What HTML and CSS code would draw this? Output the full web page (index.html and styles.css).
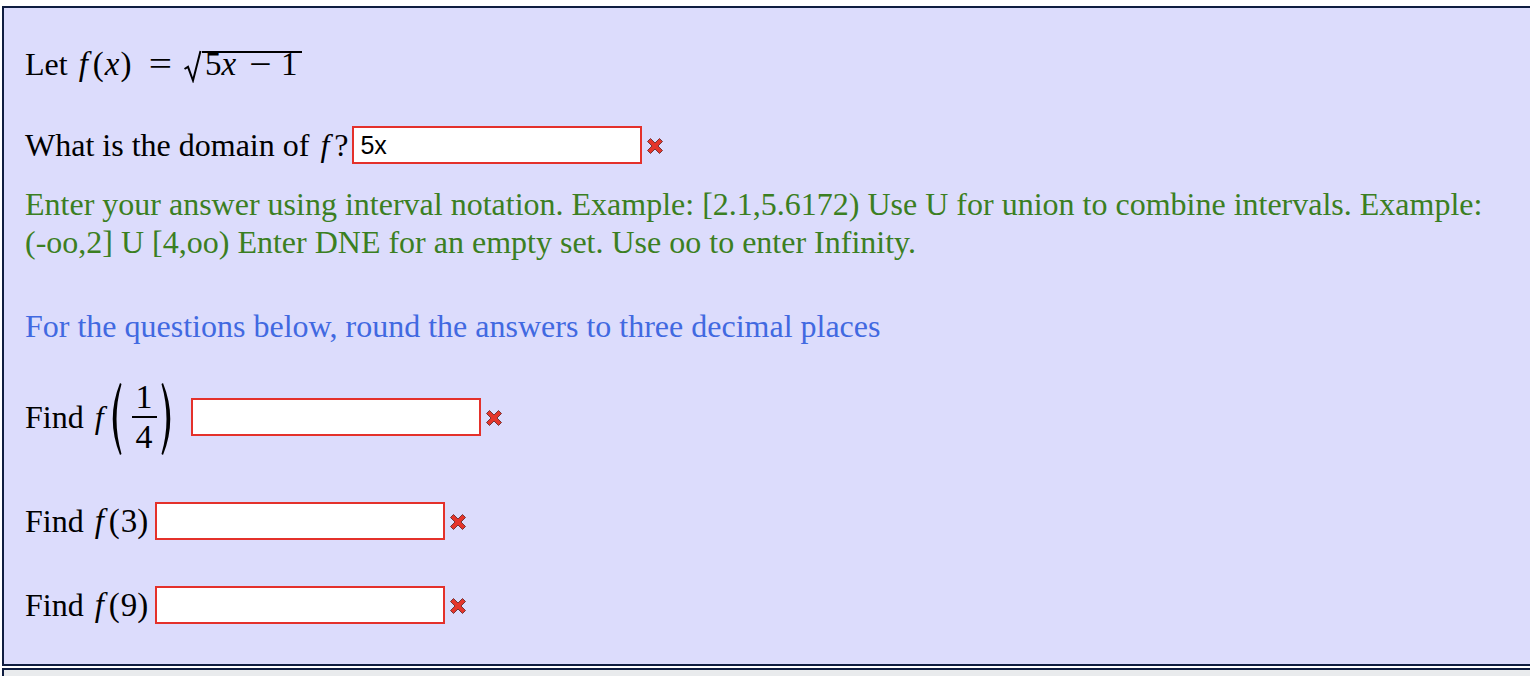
FILE: index.html
```html
<!DOCTYPE html>
<html>
<head>
<meta charset="utf-8">
<link rel="stylesheet" href="styles.css">
</head>
<body>
<div class="problem">
  <div class="row r-let">
    <span class="lbl">Let <span class="math"><i class="mf">f</i><span class="p">(</span><i class="mx">x</i><span class="p">)</span><span class="eq">=</span><span class="sqrt"><svg class="rad" width="18" height="33" viewBox="0 0 18 33"><path d="M0.5 19 L4 16.8 L9 30.5 L16.5 1" stroke="#000" stroke-width="2" fill="none" stroke-linejoin="miter"/></svg><span class="radicand">5<i class="mx">x</i><span class="minus">−</span>1</span></span></span></span>
  </div>
  <div class="row r-domain">
    <span class="lbl">What is the domain of <i class="mf">f</i>?</span>
    <input class="ans ans-wide" type="text" value="5x">
    <svg class="cross" width="16" height="16" viewBox="0 0 16 16"><path d="M3.5 0.5 L8 5 L12.5 0.5 L15.5 3.5 L11 8 L15.5 12.5 L12.5 15.5 L8 11 L3.5 15.5 L0.5 12.5 L5 8 L0.5 3.5 Z" fill="#e5352b" stroke="#6a2d2d" stroke-width="0.9"/></svg>
  </div>
  <p class="hint">Enter your answer using interval notation. Example: [2.1,5.6172) Use U for union to combine intervals. Example: <span class="nw">(-oo,2]</span> U [4,oo) Enter DNE for an empty set. Use oo to enter Infinity.</p>
  <p class="note">For the questions below, round the answers to three decimal places</p>
  <div class="row r-frac">
    <span class="lbl">Find <i class="mf">f</i></span>
    <svg class="bigp" width="17" height="74" viewBox="0 0 17 74"><path d="M15 1 Q0.5 37 15 73 L16.5 72 Q6.5 37 16.5 2 Z" fill="#000"/></svg>
    <span class="frac"><span class="num">1</span><span class="bar"></span><span class="den">4</span></span>
    <svg class="bigp bigp-r" width="17" height="74" viewBox="0 0 17 74"><path d="M2 1 Q16.5 37 2 73 L0.5 72 Q10.5 37 0.5 2 Z" fill="#000"/></svg>
    <input class="ans ans-frac" type="text" value="">
    <svg class="cross" width="16" height="16" viewBox="0 0 16 16"><path d="M3.5 0.5 L8 5 L12.5 0.5 L15.5 3.5 L11 8 L15.5 12.5 L12.5 15.5 L8 11 L3.5 15.5 L0.5 12.5 L5 8 L0.5 3.5 Z" fill="#e5352b" stroke="#6a2d2d" stroke-width="0.9"/></svg>
  </div>
  <div class="row r-f3">
    <span class="lbl">Find <span class="math"><i class="mf">f</i><span class="p">(</span>3<span class="p">)</span></span></span>
    <input class="ans" type="text" value="">
    <svg class="cross" width="16" height="16" viewBox="0 0 16 16"><path d="M3.5 0.5 L8 5 L12.5 0.5 L15.5 3.5 L11 8 L15.5 12.5 L12.5 15.5 L8 11 L3.5 15.5 L0.5 12.5 L5 8 L0.5 3.5 Z" fill="#e5352b" stroke="#6a2d2d" stroke-width="0.9"/></svg>
  </div>
  <div class="row r-f9">
    <span class="lbl">Find <span class="math"><i class="mf">f</i><span class="p">(</span>9<span class="p">)</span></span></span>
    <input class="ans" type="text" value="">
    <svg class="cross" width="16" height="16" viewBox="0 0 16 16"><path d="M3.5 0.5 L8 5 L12.5 0.5 L15.5 3.5 L11 8 L15.5 12.5 L12.5 15.5 L8 11 L3.5 15.5 L0.5 12.5 L5 8 L0.5 3.5 Z" fill="#e5352b" stroke="#6a2d2d" stroke-width="0.9"/></svg>
  </div>
</div>
<div class="next"></div>
</body>
</html>
```
FILE: styles.css
```css
html, body {
  margin: 0;
  padding: 0;
  background: #ffffff;
  overflow: hidden;
}
body {
  font-family: "Liberation Serif", "Times New Roman", serif;
  font-size: 32px;
  color: #000;
}
.problem {
  margin: 6px 0 0 2px;
  width: 1560px;
  border: 2px solid #0f1d40;
  background: #dcdcfc;
  padding: 37px 0 40px 21px;
}
.row {
  display: flex;
  align-items: center;
  height: 38px;
  line-height: 38px;
  white-space: nowrap;
}
.lbl {
  display: inline-block;
}
.math {
  font-size: 33px;
}
.mf {
  font-style: italic;
  margin-left: 3px;
  margin-right: 5px;
}
.mx {
  font-style: italic;
  margin-right: 1px;
}
.p {
  margin-right: 1px;
}
.eq {
  display: inline-block;
  margin-left: 19px;
  margin-right: 14px;
  transform: scaleX(1.25);
}
.sqrt {
  display: inline-block;
  white-space: nowrap;
}
.rad {
  vertical-align: -8px;
}
.radicand {
  display: inline-block;
  border-top: 2px solid #000;
  line-height: 22px;
  padding: 0 5px 0 3px;
}
.minus {
  display: inline-block;
  margin: 0 11px 0 14px;
  transform: scaleX(1.2);
}
.r-domain {
  margin-top: 43px;
}
.ans {
  box-sizing: border-box;
  width: 290px;
  height: 38px;
  border: 2px solid #e4312b;
  background: #ffffff;
  padding: 0 6px;
  margin: 0 0 0 6px;
  font-family: "Liberation Sans", Arial, sans-serif;
  font-size: 25px;
  color: #000;
  outline: none;
}
.ans-wide {
  margin-left: 4px;
}
.ans-frac {
  margin-left: 13px;
}
.cross {
  margin-left: 5px;
  margin-top: 2px;
}
.hint {
  margin: 21px 0 0 0;
  max-width: 1490px;
  line-height: 38px;
  color: #3b7f22;
}
.nw {
  white-space: nowrap;
}
.note {
  margin: 46px 0 0 0;
  line-height: 38px;
  color: #4169e1;
}
.r-frac {
  margin-top: 34px;
  height: 76px;
}
.bigp {
  margin-left: -4px;
  margin-top: 4px;
}
.bigp-r {
  margin-left: 4px;
}
.frac {
  display: inline-flex;
  flex-direction: column;
  align-items: center;
  margin: 0 0 0 10px;
  font-size: 34px;
  text-align: center;
}
.num {
  line-height: 30px;
  padding-bottom: 4px;
}
.den {
  line-height: 30px;
  padding-top: 4px;
}
.bar {
  display: block;
  height: 2px;
  width: 25px;
  background: #000;
}
.r-f3 {
  margin-top: 47px;
}
.r-f9 {
  margin-top: 46px;
}
.next {
  margin: 2px 0 0 2px;
  width: 1560px;
  height: 30px;
  border: 2px solid #0f1d40;
  border-bottom: none;
  background: #e9ebed;
}
```
